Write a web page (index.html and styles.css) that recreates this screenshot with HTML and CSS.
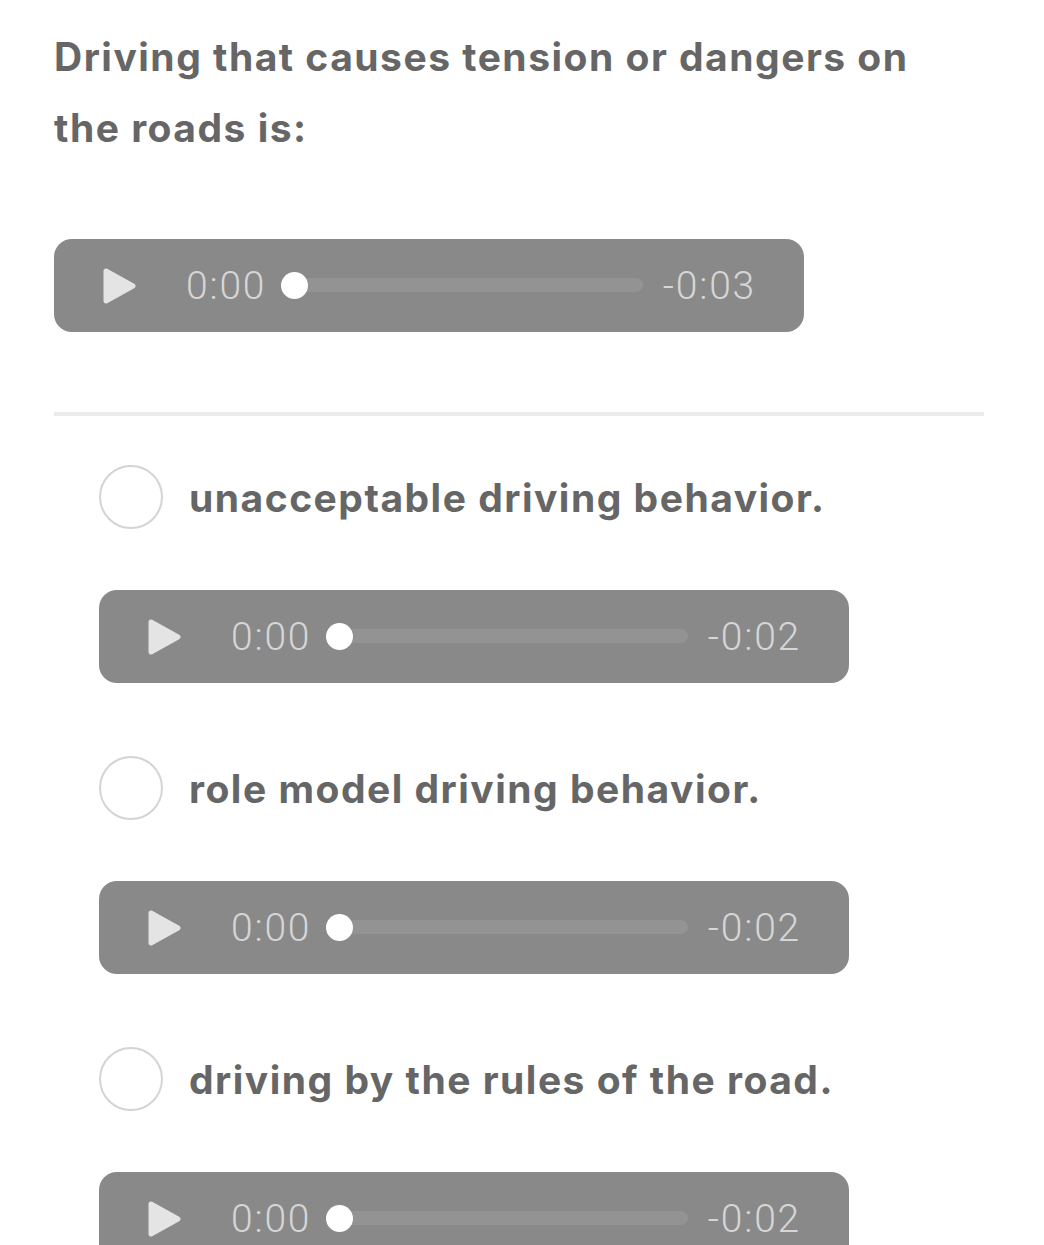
FILE: index.html
```html
<!DOCTYPE html>
<html lang="en">
<head>
  <meta charset="UTF-8">
  <meta name="viewport" content="width=device-width, initial-scale=1.0">
  <title>Question</title>
  <link rel="stylesheet" href="styles.css">
</head>
<body>

  <main class="page">
    <h1 class="question">Driving that causes tension or dangers on the roads is:</h1>

    <div class="player">
      <svg class="play" viewBox="0 0 34 38"><path d="M4 4 L31 19 L4 34 Z"/></svg>
      <span class="time">0:00</span>
      <div class="slider"><div class="track"></div><div class="knob"></div></div>
      <span class="time">-0:03</span>
    </div>

    <hr class="divider">

    <ul class="answers">
      <li class="answer">
        <label class="choice"><span class="radio"></span><span class="choice-text">unacceptable driving behavior.</span></label>
        <div class="player">
          <svg class="play" viewBox="0 0 34 38"><path d="M4 4 L31 19 L4 34 Z"/></svg>
          <span class="time">0:00</span>
          <div class="slider"><div class="track"></div><div class="knob"></div></div>
          <span class="time">-0:02</span>
        </div>
      </li>
      <li class="answer">
        <label class="choice"><span class="radio"></span><span class="choice-text">role model driving behavior.</span></label>
        <div class="player">
          <svg class="play" viewBox="0 0 34 38"><path d="M4 4 L31 19 L4 34 Z"/></svg>
          <span class="time">0:00</span>
          <div class="slider"><div class="track"></div><div class="knob"></div></div>
          <span class="time">-0:02</span>
        </div>
      </li>
      <li class="answer">
        <label class="choice"><span class="radio"></span><span class="choice-text">driving by the rules of the road.</span></label>
        <div class="player">
          <svg class="play" viewBox="0 0 34 38"><path d="M4 4 L31 19 L4 34 Z"/></svg>
          <span class="time">0:00</span>
          <div class="slider"><div class="track"></div><div class="knob"></div></div>
          <span class="time">-0:02</span>
        </div>
      </li>
    </ul>
  </main>

</body>
</html>
```

FILE: styles.css
```css
body {
  margin: 0;
  background: #fff;
  font-family: Inter, "Noto Sans", sans-serif;
  color: #666;
}
.page {
  padding: 21px 60px 0 54px;
}
.question {
  margin: 0;
  max-width: 900px;
  font-size: 39px;
  font-weight: 700;
  line-height: 71px;
  letter-spacing: 1.5px;
}

/* audio player */
.player {
  box-sizing: border-box;
  width: 750px;
  height: 93px;
  display: flex;
  align-items: center;
  padding: 0 48px 0 48px;
  border-radius: 18px;
  background: #898989;
}
.page > .player {
  margin-top: 76px;
}
.play {
  width: 34px;
  height: 38px;
  flex-shrink: 0;
  margin-right: 50px;
}
.play path {
  fill: #e4e4e4;
  stroke: #e4e4e4;
  stroke-width: 5;
  stroke-linejoin: round;
}
.time {
  font-family: Roboto, sans-serif;
  font-weight: 300;
  font-size: 39px;
  letter-spacing: 1.8px;
  color: #d6d6d6;
}
.slider {
  flex: 1;
  position: relative;
  height: 27px;
  margin: 0 20px 0 15px;
}
.track {
  height: 14px;
  margin-top: 6px;
  border-radius: 7px;
  background: #939393;
}
.knob {
  position: absolute;
  left: 0;
  top: 0;
  width: 27px;
  height: 27px;
  border-radius: 50%;
  background: #fff;
}

.divider {
  margin: 80px 0 0;
  height: 4px;
  border: none;
  background: #ebebeb;
}

/* answers */
.answers {
  list-style: none;
  margin: 49px 0 0;
  padding: 0 0 0 45px;
  display: flex;
  flex-direction: column;
  gap: 73px;
}
.answer {
  display: flex;
  flex-direction: column;
  gap: 61px;
}
.choice {
  display: flex;
  align-items: center;
  gap: 26px;
}
.radio {
  box-sizing: border-box;
  width: 64px;
  height: 64px;
  border: 2.5px solid #d4d4d4;
  border-radius: 50%;
  flex-shrink: 0;
}
.choice-text {
  font-size: 39px;
  font-weight: 700;
  letter-spacing: 1.5px;
}
```
